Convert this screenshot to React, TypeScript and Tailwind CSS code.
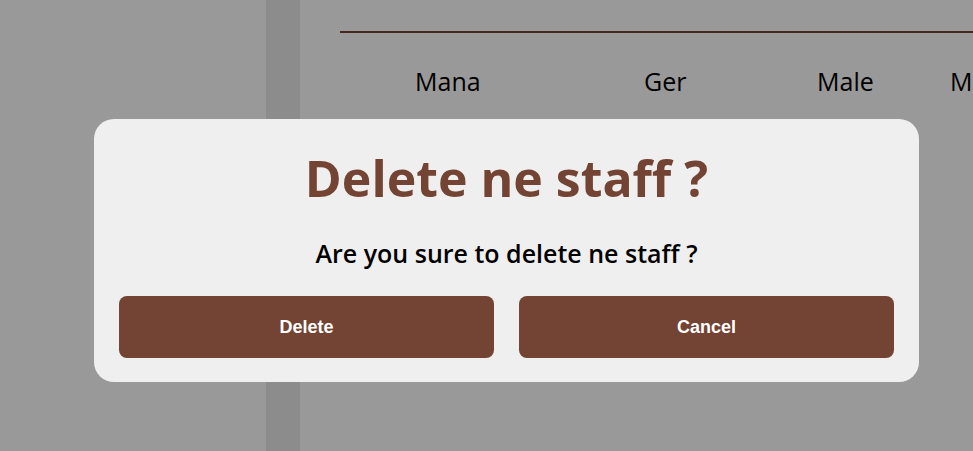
export default function App() {
  return (
    <div className="relative w-[973px] h-[451px] overflow-hidden bg-white" style={{ fontFamily: '"Open Sans", sans-serif' }}>
      {/* underlying page */}
      <div className="flex h-full">
        <div className="w-[266px] shrink-0 bg-white" />
        <div className="w-[34px] shrink-0 bg-[#e9e9e9]" />
        <div className="flex-1 pl-[40px] pt-[31px] min-w-0">
          <div className="h-[2px] bg-[#734434]" />
          <div className="flex pt-[32px] pl-[75px] text-[25px] leading-[32px] text-black whitespace-nowrap">
            <div className="w-[229px] shrink-0">Mana</div>
            <div className="w-[173px] shrink-0">Ger</div>
            <div className="w-[133px] shrink-0">Male</div>
            <div className="shrink-0">Mobile</div>
          </div>
        </div>
      </div>
      {/* overlay */}
      <div className="absolute inset-0 bg-black/40" />
      {/* modal */}
      <div className="absolute left-[94px] top-[119px] w-[825px] rounded-[20px] bg-[#efefef] px-[25px] pt-[34px] pb-[24px] flex flex-col items-center">
        <h1 className="text-[50px] leading-none font-bold text-[#734434]">Delete ne staff ?</h1>
        <p className="mt-[38px] text-[25px] leading-none font-semibold text-black">Are you sure to delete ne staff ?</p>
        <div className="mt-[30px] grid grid-cols-2 gap-[25px] w-full">
          <button className="h-[62px] rounded-[8px] bg-[#734434] text-white text-[18px] font-bold" style={{ fontFamily: '"Liberation Sans", Arial, sans-serif' }}>Delete</button>
          <button className="h-[62px] rounded-[8px] bg-[#734434] text-white text-[18px] font-bold" style={{ fontFamily: '"Liberation Sans", Arial, sans-serif' }}>Cancel</button>
        </div>
      </div>
    </div>
  );
}
